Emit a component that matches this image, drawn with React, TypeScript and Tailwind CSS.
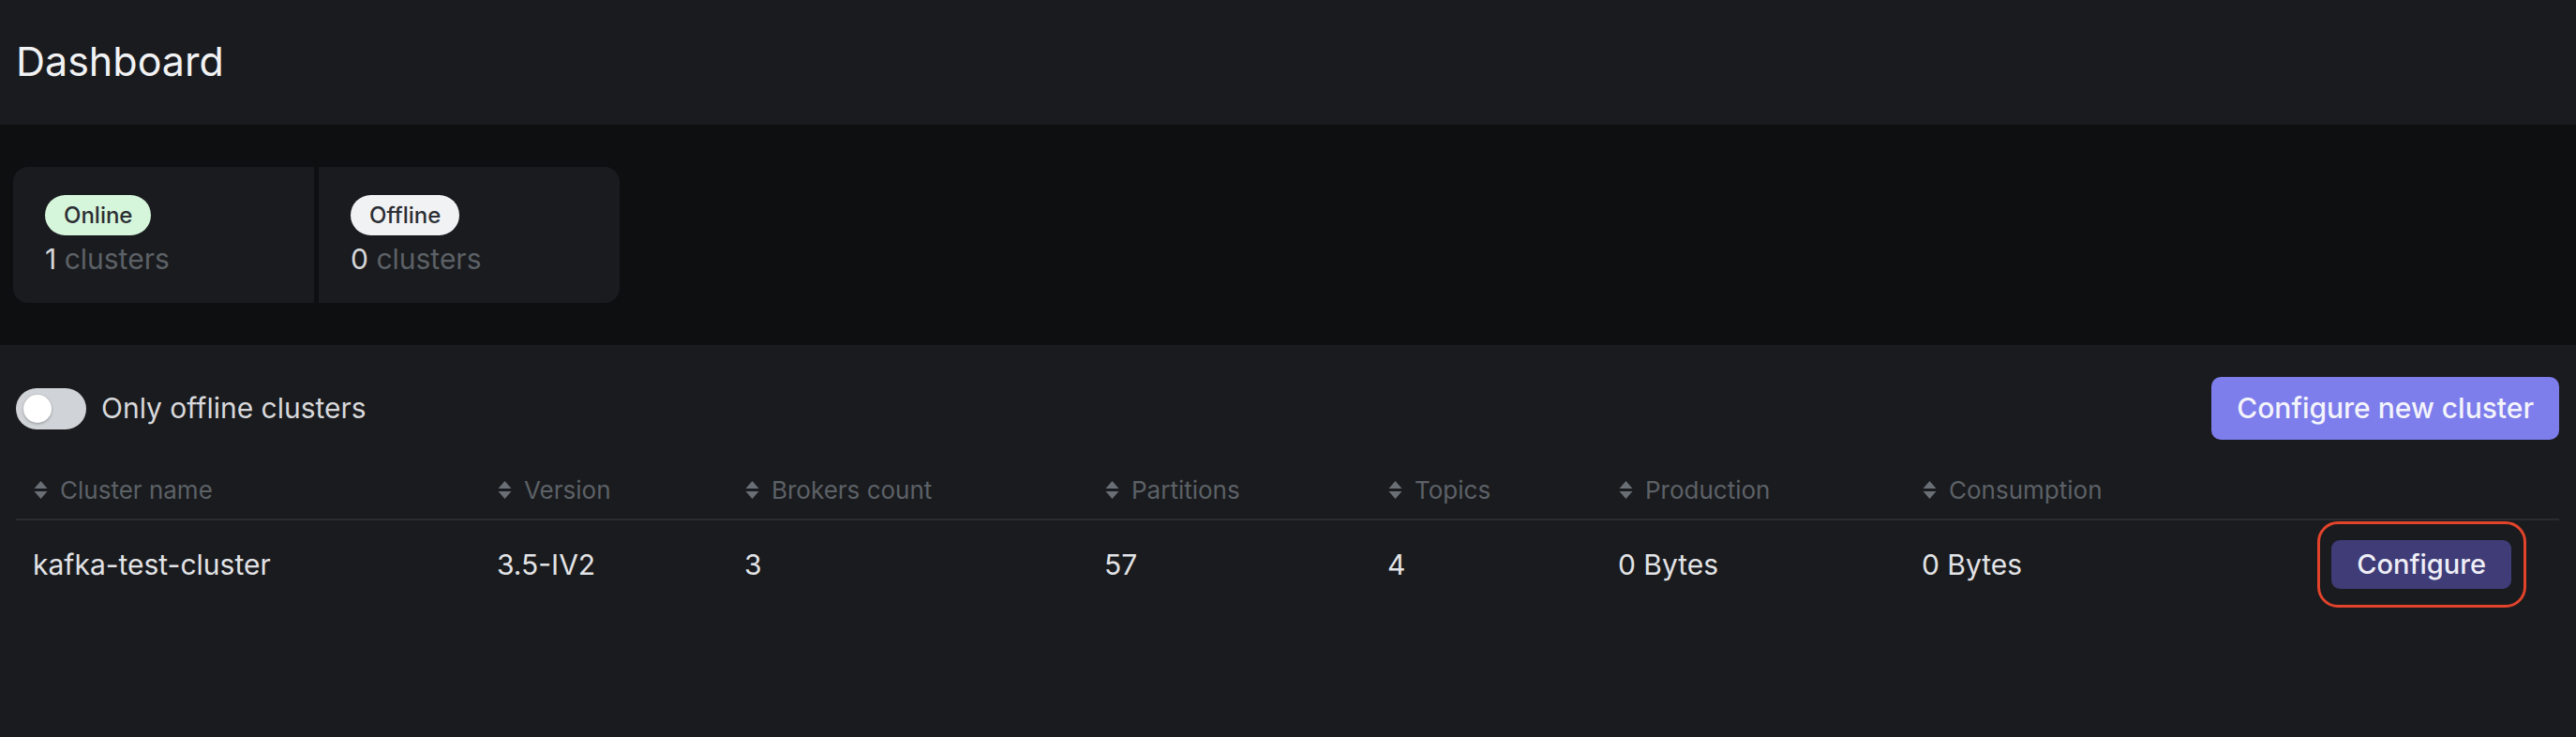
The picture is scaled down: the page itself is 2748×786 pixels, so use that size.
import React from "react";

const columns = [
  "Cluster name",
  "Version",
  "Brokers count",
  "Partitions",
  "Topics",
  "Production",
  "Consumption",
];

const row = ["kafka-test-cluster", "3.5-IV2", "3", "57", "4", "0 Bytes", "0 Bytes"];

function SortIcon() {
  return (
    <svg width="17" height="21" viewBox="0 0 17 21" className="shrink-0">
      <path d="M8.5 1 L15.5 9 H1.5 Z" fill="#6a6f76" />
      <path d="M8.5 20 L15.5 12 H1.5 Z" fill="#6a6f76" />
    </svg>
  );
}

function StatCard({ label, count, badge }: { label: string; count: number; badge: string }) {
  return (
    <div className="bg-[#1a1b1e] w-[321px] h-[145px] pl-[34px] pt-[30px]">
      <span
        className={`inline-flex items-center h-[43px] px-[20px] rounded-full text-[24px] font-medium text-[#2c2e33] ${badge}`}
      >
        {label}
      </span>
      <div className="mt-[5px] text-[30px] leading-[40px]">
        <span className="text-[#d6d7da]">{count}</span>{" "}
        <span className="text-[#5c6167]">clusters</span>
      </div>
    </div>
  );
}

export default function App() {
  return (
    <div className="min-h-screen bg-[#1a1b1e] font-['Inter','Noto_Sans',sans-serif] text-[#dcdde0]">
      <div className="h-[133px] flex items-center px-[17px]">
        <h1 className="text-[43px] text-[#f1f2f4] -mt-[2px]">Dashboard</h1>
      </div>

      <div className="bg-[#0e0f11] h-[235px] px-[14px] pt-[45px]">
        <div className="inline-flex gap-[5px] rounded-[16px] overflow-hidden">
          <StatCard label="Online" count={1} badge="bg-[#d6f6dc]" />
          <StatCard label="Offline" count={0} badge="bg-[#f1f2f4]" />
        </div>
      </div>

      <div className="pl-[17px] pr-[18px] pt-[34px]">
        <div className="flex items-center justify-between">
          <div className="flex items-center gap-[16px]">
            <div className="w-[75px] h-[44px] rounded-full bg-[#d0d3d7] flex items-center pl-[8px]">
              <div className="w-[30px] h-[30px] rounded-full bg-white shadow-[0_1px_3px_rgba(0,0,0,0.3)]" />
            </div>
            <span className="text-[30px] text-[#d8d9dc]">Only offline clusters</span>
          </div>
          <button className="h-[67px] px-[27px] rounded-[10px] bg-[#7d7deb] text-[30px] font-medium text-[#f4f4fb]">
            Configure new cluster
          </button>
        </div>

        <div className="mt-[14px]">
          <div className="grid grid-cols-[495px_264px_384px_302px_246px_324px_300px_1fr] items-center h-[72px] pt-[8px] pl-[18px] border-b-2 border-[#2a2c31]">
            {columns.map((c) => (
              <div key={c} className="flex items-center gap-[12px] text-[26px] text-[#5c6167]">
                <SortIcon />
                <span>{c}</span>
              </div>
            ))}
            <div />
          </div>

          <div className="grid grid-cols-[495px_264px_384px_302px_246px_324px_300px_1fr] items-center h-[94px] pl-[18px]">
            {row.map((v, i) => (
              <div key={i} className="text-[30px] text-[#e2e3e6]">
                {v}
              </div>
            ))}
            <div className="flex justify-end pr-[35px]">
              <div className="border-[3px] border-[#e2432b] rounded-[22px] pl-[12px] pr-[13px] py-[17px]">
                <button className="h-[52px] px-[27px] rounded-[9px] bg-[#3f3c77] text-[29px] font-medium text-[#eeeef6]">
                  Configure
                </button>
              </div>
            </div>
          </div>
        </div>
      </div>
    </div>
  );
}
